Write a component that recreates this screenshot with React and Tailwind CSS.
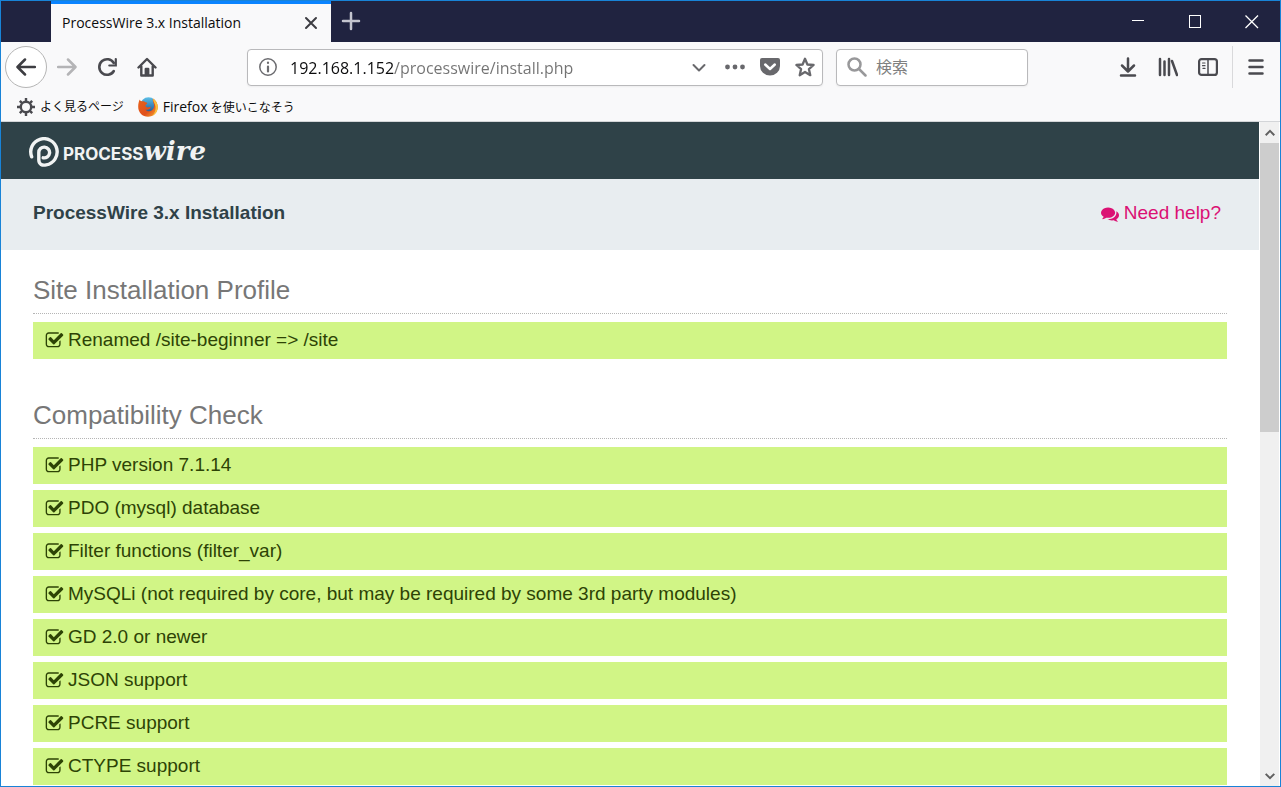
import { useState } from "react";

const profileChecks = ["Renamed /site-beginner => /site"];

const compatibilityChecks = [
  "PHP version 7.1.14",
  "PDO (mysql) database",
  "Filter functions (filter_var)",
  "MySQLi (not required by core, but may be required by some 3rd party modules)",
  "GD 2.0 or newer",
  "JSON support",
  "PCRE support",
  "CTYPE support",
];

const CheckIcon = () => (
  <svg className="size-[19px] shrink-0" viewBox="0 0 1792 1792" fill="currentColor" aria-hidden="true">
    <path d="M1472 930v318q0 119-84.5 203.5t-203.5 84.5h-832q-119 0-203.5-84.5t-84.5-203.5v-832q0-119 84.5-203.5t203.5-84.5h832q63 0 117 25 15 7 18 23 3 17-9 29l-49 49q-10 10-23 10-3 0-9-2-23-6-45-6h-832q-66 0-113 47t-47 113v832q0 66 47 113t113 47h832q66 0 113-47t47-113v-254q0-13 9-22l64-64q10-10 23-10 6 0 12 3 20 8 20 29zm231-489l-814 814q-24 24-57 24t-57-24l-430-430q-24-24-24-57t24-57l110-110q24-24 57-24t57 24l263 263 647-647q24-24 57-24t57 24l110 110q24 24 24 57t-24 57z" />
  </svg>
);

const CommentsIcon = () => (
  <svg className="size-[18px]" viewBox="0 0 1792 1792" fill="currentColor" aria-hidden="true">
    <path d="M1408 768q0 139-94 257t-256.5 186.5-353.5 68.5q-86 0-176-16-124 88-278 128-36 9-86 16h-3q-11 0-20.5-8t-11.5-21q-1-3-1-6.5t.5-6.5 2-6l2.5-5 3.5-5.5 4-5 4.5-5 4-4.500q5-6 23-25t26-29.5 22.5-29 25-38.5 20.5-44q-124-72-195-177t-71-224q0-139 94-257t256.5-186.5 353.5-68.5 353.5 68.5 256.5 186.5 94 257zm384 256q0 120-71 224.5t-195 176.5q10 24 20.5 44t25 38.5 22.5 29 26 29.5 23 25q1 1 4 4.500t4.5 5 4 5 3.5 5.5l2.5 5 2 6 .5 6.5-1 6.5q-3 14-13 22t-22 7q-50-7-86-16-154-40-278-128-90 16-176 16-271 0-472-132 58 4 88 4 161 0 309-45t264-129q125-92 192-212t67-254q0-77-23-152 129 71 204 178t75 230z" />
  </svg>
);

// 20px line icon used all over the browser toolbar
const LineIcon = ({ children, className = "size-5", width = 2.5 }) => (
  <svg className={className} viewBox="0 0 20 20" fill="none" stroke="currentColor" strokeWidth={width} strokeLinecap="round" strokeLinejoin="round" aria-hidden="true">
    {children}
  </svg>
);

const FirefoxLogo = () => (
  <svg className="size-5" viewBox="0 0 20 20" aria-hidden="true">
    <defs>
      <linearGradient id="fox" x1="0" y1="0" x2="1" y2="1">
        <stop offset="0" stopColor="#e8641b" />
        <stop offset="0.6" stopColor="#e0501c" />
        <stop offset="1" stopColor="#f9b233" />
      </linearGradient>
      <linearGradient id="globe" x1="0" y1="0" x2="0" y2="1">
        <stop offset="0" stopColor="#5cc0e8" />
        <stop offset="1" stopColor="#1c4f8f" />
      </linearGradient>
    </defs>
    <circle cx="10.5" cy="8.5" r="8.3" fill="url(#globe)" />
    <path d="M1.6 2.6C2 4 3 4.300 4.200 4.200 5.500 4 7 4.600 7.600 5.300c1 .2 1.700.4 1.600 1.100-.3.8-1.700 1.100-1.800 2.200.2 1 .8 1.700 2 1.800 1.300 0 2-.8 3.200-.2.500.5-.2 1.100-.9 1.500-1.300 1-2.900 1.600-4.400.8 1.600 2 4.600 2.400 6.700.8 2.200-1.800 2.700-4.800 1.500-7.300C14.900 4.300 14.600 3 14.900 1.500c2.800 1.700 4.900 4.900 4.900 8.500 0 5.500-4.400 9.800-9.800 9.800S.2 15.500.2 10c0-2.800.500-5.300 1.400-7.400z" fill="url(#fox)" />
    <path d="M14.900 1.500c2.800 1.700 4.900 4.900 4.900 8.500 0 4-2.400 7.400-5.800 9 2.700-2.600 3.900-5.600 3.500-9.200-.2-3.100-2.400-4.600-2.600-8.300z" fill="#fbc23b" />
  </svg>
);

const Logo = () => (
  <a href="#" aria-label="ProcessWire" className="flex items-center gap-1 text-[#f1f3f3]">
    <svg className="size-[30px]" viewBox="0 0 30 30" fill="none" stroke="currentColor" aria-hidden="true">
      <path d="M2.700 19.800A13.200 13.200 0 1 1 17.200 27.900C13.200 28.700 10 27.500 9.800 23V15.500A5.400 5.400 0 1 1 14.200 20.800" strokeWidth="3.400" strokeLinecap="round" />
    </svg>
    <span className="flex items-baseline leading-7">
      <span className="font-['Inter',sans-serif] text-[17px] font-bold">PROCESS</span>
      <span className="font-['DejaVu_Serif',serif] text-[26px] font-bold italic">wire</span>
    </span>
  </a>
);

const ToolButton = ({ label, className = "text-[#4a4a4f]", children }) => (
  <button type="button" aria-label={label} className={`flex h-10 w-10 items-center justify-center ${className}`}>
    {children}
  </button>
);

const TitleBar = () => (
  <div className="flex h-[41px] shrink-0 bg-[#202340] pl-[50px]">
    <div className="flex w-[280px] items-center justify-between border-t-[3px] border-[#0a84ff] bg-[#f9f9fa] pr-[10px] pl-[11px]">
      <span className="text-sm whitespace-nowrap text-[#0c0c0d]">ProcessWire 3.x Installation</span>
      <button type="button" aria-label="Close tab" className="text-[#3d3d42]">
        <LineIcon width={2}><path d="M5 5l10 10M15 5L5 15" /></LineIcon>
      </button>
    </div>
    <ToolButton label="New tab" className="text-[#c4c5cf]">
      <LineIcon><path d="M10 2v16M2 10h16" /></LineIcon>
    </ToolButton>
    <div className="ml-auto flex items-center text-white">
      <button type="button" aria-label="Minimize" className="flex w-[57px] justify-center">
        <svg className="size-[14px]" viewBox="0 0 14 14" stroke="currentColor"><path d="M1 5.500h12" /></svg>
      </button>
      <button type="button" aria-label="Maximize" className="flex w-[57px] justify-center">
        <svg className="size-[14px]" viewBox="0 0 14 14" fill="none" stroke="currentColor"><rect x="1.500" y=".5" width="11" height="12" /></svg>
      </button>
      <button type="button" aria-label="Close" className="flex w-[57px] justify-center">
        <svg className="size-[14px]" viewBox="0 0 14 14" stroke="currentColor" strokeWidth="1.300"><path d="M.5 .5l12.500 12.500M13 .5L.5 13" /></svg>
      </button>
    </div>
  </div>
);

const NavBar = () => {
  const [url, setUrl] = useState("192.168.1.152/processwire/install.php");
  const [search, setSearch] = useState("");

  return (
    <div className="flex h-[50px] shrink-0 items-center px-1">
      <button type="button" aria-label="Back" className="flex size-[42px] items-center justify-center rounded-full border border-[#b5b5b5] bg-white text-[#3d3d42]">
        <LineIcon><path d="M19 10H2M9 2.500L1.500 10 9 17.500" /></LineIcon>
      </button>
      <ToolButton label="Forward" className="text-[#b4b4b6]">
        <LineIcon><path d="M1 10h17M11 2.500l7.500 7.500-7.500 7.500" /></LineIcon>
      </ToolButton>
      <ToolButton label="Reload">
        <LineIcon width={2.6}>
          <path d="M16.800 6A7.800 7.800 0 1 0 16.800 14" />
          <path d="M18.800 2v6.500h-6.500" strokeWidth="2.200" strokeLinejoin="miter" />
        </LineIcon>
      </ToolButton>
      <ToolButton label="Home">
        <LineIcon width={2.4}>
          <path d="M1.500 10.500L10 2l8.500 8.500M4.300 9.500v9h11.400v-9" />
          <path d="M8.800 18v-6h2.400v6" />
        </LineIcon>
      </ToolButton>

      <div className="ml-20 flex h-[37px] flex-1 items-center rounded-sm border border-[#b9b9bb] bg-white pl-[10px] shadow-xs">
        <LineIcon className="size-5 text-[#6c6c70]" width={1.5}>
          <circle cx="10" cy="10" r="8.200" />
          <path d="M10 9.500v5M10 5.600v.3" strokeWidth="2.200" />
        </LineIcon>
        <input
          aria-label="Address"
          value={url}
          onChange={(e) => setUrl(e.target.value)}
          className="ml-3 min-w-0 flex-1 bg-[linear-gradient(to_right,#0c0c0d_104px,#737373_104px)] bg-clip-text pt-px text-base text-transparent caret-black outline-none"
        />
        <div className="flex items-center text-[#68686c]">
          <button type="button" aria-label="Show history" className="flex w-9 justify-center">
            <LineIcon width={2}><path d="M4.500 8l5.500 5.500L15.500 8" /></LineIcon>
          </button>
          <button type="button" aria-label="Page actions" className="flex w-9 justify-center">
            <svg className="size-5" viewBox="0 0 20 20" fill="currentColor">
              <circle cx="2.500" cy="10" r="2.400" />
              <circle cx="10" cy="10" r="2.400" />
              <circle cx="17.500" cy="10" r="2.400" />
            </svg>
          </button>
          <button type="button" aria-label="Save to Pocket" className="flex w-[34px] justify-center">
            <svg className="size-5" viewBox="0 0 20 20" fill="none">
              <path d="M2 1h16q2 0 2 2v6a10 9.500 0 0 1-20 0V3q0-2 2-2z" fill="currentColor" />
              <path d="M5.200 7.500l4.800 4.500 4.800-4.500" stroke="#fff" strokeWidth="2.500" strokeLinecap="round" strokeLinejoin="round" />
            </svg>
          </button>
          <button type="button" aria-label="Bookmark this page" className="flex w-[35px] justify-center">
            <LineIcon width={2.3}>
              <path d="M10 1.800l2.400 5.700 6.200.5-4.700 4.100 1.400 6.100L10 15l-5.300 3.200 1.400-6.100L1.400 8l6.200-.5z" />
            </LineIcon>
          </button>
        </div>
      </div>

      <label className="ml-[13px] flex h-[37px] w-[192px] items-center rounded-sm border border-[#b9b9bb] bg-white pl-[10px] shadow-xs">
        <LineIcon className="size-5 shrink-0 text-[#98989a]">
          <circle cx="7.500" cy="7.500" r="6" />
          <path d="M12 12l6.500 6.500" />
        </LineIcon>
        <input
          aria-label="検索"
          placeholder="検索"
          value={search}
          onChange={(e) => setSearch(e.target.value)}
          className="ml-[9px] w-full min-w-0 text-base outline-none placeholder:text-[#808080]"
        />
      </label>

      <div className="ml-20 flex">
        <ToolButton label="Downloads">
          <LineIcon><path d="M10 1.500v12M4 8.500l6 6 6-6M3 18.500h14" /></LineIcon>
        </ToolButton>
        <ToolButton label="Library">
          <LineIcon><path d="M2 2v16M6.500 4.500V18M11 2v16M14 4l5 14" /></LineIcon>
        </ToolButton>
        <ToolButton label="Sidebars">
          <LineIcon width={2.2}>
            <rect x="1.100" y="2.100" width="17.800" height="15.800" rx="2.500" />
            <path d="M10 2v16" strokeWidth="1.500" />
            <path d="M4.500 6h2.500M4.500 8.700h2.500M5 11.400h2" strokeWidth="1.200" />
          </LineIcon>
        </ToolButton>
      </div>
      <div className="ml-1 h-[42px] w-px bg-[#d9d9db]" />
      <ToolButton label="Open menu" className="ml-[3px] text-[#4a4a4f]">
        <LineIcon><path d="M3.500 3.500h13M3.500 10h13M3.500 16.500h13" /></LineIcon>
      </ToolButton>
    </div>
  );
};

const BookmarksBar = () => (
  <div className="flex h-[30px] shrink-0 items-center gap-[14px] border-b border-[#d3d5d8] pl-[15px] text-xs text-[#0c0c0d]">
    <a href="#" className="flex items-center gap-1">
      <svg className="size-5 text-[#4a4a4f]" viewBox="0 0 20 20" fill="none" stroke="currentColor" aria-hidden="true">
        <circle cx="10" cy="10" r="5.200" strokeWidth="2.400" />
        <path d="M10 1v3.500M10 15.500V19M1 10h3.500M15.500 10H19M3.800 3.800l2.300 2.300M13.900 13.900l2.300 2.300M16.200 3.800l-2.300 2.300M6.100 13.900l-2.300 2.300" strokeWidth="2.400" />
      </svg>
      よく見るページ
    </a>
    <a href="#" className="flex items-center gap-[5px]">
      <FirefoxLogo />
      <span>
        <span className="text-sm">Firefox</span> を使いこなそう
      </span>
    </a>
  </div>
);

const CheckSection = ({ title, items }) => (
  <section className="mb-10">
    <h2 className="mb-2 border-b border-dotted border-[#b5b5b5] pb-[7px] text-[26px] leading-8 text-[#777]">{title}</h2>
    <ul className="flex flex-col gap-[6px]">
      {items.map((item) => (
        <li key={item} className="flex h-[37px] items-center gap-1 bg-[#d1f586] px-3 text-[19px] text-[#2d4305]">
          <CheckIcon />
          {item}
        </li>
      ))}
    </ul>
  </section>
);

const ScrollBar = () => (
  <div className="flex w-[21px] shrink-0 flex-col border-x border-white bg-[#f0f0f0] text-[#606060]">
    <button type="button" aria-label="Scroll up" className="flex h-[21px] shrink-0 items-center justify-center">
      <svg className="size-[10px]" viewBox="0 0 10 10" fill="none" stroke="currentColor" strokeWidth="2"><path d="M.7 7.200L5 2.900l4.300 4.300" /></svg>
    </button>
    <div className="min-h-0 flex-1">
      <div className="h-[46.500%] bg-[#cdcdcd]" />
    </div>
    <button type="button" aria-label="Scroll down" className="flex h-[21px] shrink-0 items-center justify-center">
      <svg className="size-[10px]" viewBox="0 0 10 10" fill="none" stroke="currentColor" strokeWidth="2"><path d="M.7 2.900L5 7.200l4.300-4.300" /></svg>
    </button>
  </div>
);

const InstallPage = () => (
  <div className="min-w-0 flex-1 overflow-hidden bg-white font-['Liberation_Sans',Arial,sans-serif]">
    <header className="flex h-[57px] items-center bg-[#2f4248] px-7 pt-[3px]">
      <Logo />
    </header>
    <div className="flex h-[71px] items-center justify-between bg-[#e8edf0] pr-[38px] pb-[2px] pl-8 text-[19px]">
      <h1 className="font-bold text-[#2f4248]">ProcessWire 3.x Installation</h1>
      <a href="#" className="flex items-center gap-[5px] text-[#db1174]">
        <CommentsIcon />
        Need help?
      </a>
    </div>
    <main className="px-8 pt-6">
      <CheckSection title="Site Installation Profile" items={profileChecks} />
      <CheckSection title="Compatibility Check" items={compatibilityChecks} />
    </main>
  </div>
);

const App = () => (
  <div className="flex h-screen flex-col overflow-hidden border border-[#1883d7] bg-[#f9f9fa] font-['Open_Sans','Noto_Sans_CJK_JP',sans-serif]">
    <TitleBar />
    <NavBar />
    <BookmarksBar />
    <div className="flex min-h-0 flex-1">
      <InstallPage />
      <ScrollBar />
    </div>
  </div>
);

export default App;
